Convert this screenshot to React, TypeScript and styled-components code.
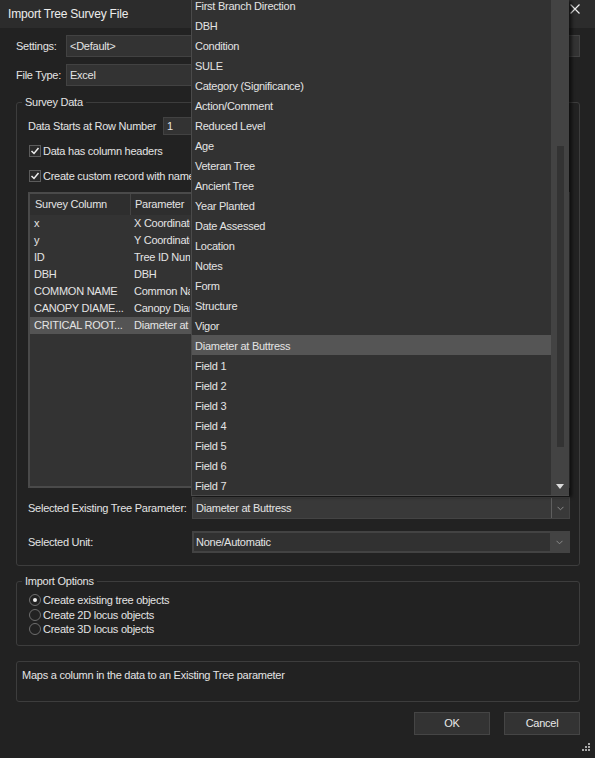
import * as React from 'react';
import styled, { createGlobalStyle } from 'styled-components';

const GlobalStyle = createGlobalStyle`
  html, body {
    margin: 0;
    padding: 0;
    background: #222222;
  }
  body {
    font-family: "Liberation Sans", Arial, sans-serif;
    font-size: 11px;
    letter-spacing: -0.25px;
    color: #e4e4e4;
  }
  * {
    box-sizing: border-box;
  }
`;

const Window = styled.div`
  position: relative;
  width: 595px;
  height: 758px;
  background: #222222;
  overflow: hidden;
`;
const TitleBar = styled.div`
  height: 28px;
  background: #2c2c2c;
  display: flex;
  justify-content: space-between;
  padding: 0 15px 0 8px;
`;
const Title = styled.span`
  font-size: 12px;
  line-height: 28px;
  letter-spacing: -0.2px;
  color: #ececec;
`;
const CloseIcon = styled.svg`
  margin-top: 4px;
`;
const Body = styled.div`
  padding: 0 15px 0 16px;
`;
const FieldRow = styled.div<{ $top: number; $height?: number }>`
  display: flex;
  align-items: center;
  height: ${p => p.$height || 22}px;
  margin-top: ${p => p.$top}px;
`;
const FieldLabel = styled.span<{ $width: number }>`
  width: ${p => p.$width}px;
  flex: none;
  white-space: nowrap;
`;
const TextBox = styled.div<{ $width?: number }>`
  flex: ${p => (p.$width ? 'none' : '1')};
  width: ${p => (p.$width ? `${p.$width}px` : 'auto')};
  height: 100%;
  display: flex;
  align-items: center;
  padding: 0 3px;
  background: #333333;
  border: 1px solid #424242;
`;
const GroupBox = styled.div<{ $top: number; $padLeft: number; $padBottom: number }>`
  margin-top: ${p => p.$top}px;
  border: 1px solid #3d3d3d;
  border-radius: 3px;
  padding: 0 9px ${p => p.$padBottom}px ${p => p.$padLeft}px;
`;
const GroupTitle = styled.div<{ $shift: number }>`
  width: fit-content;
  margin: -7px 0 0 ${p => p.$shift}px;
  padding: 0 3px;
  line-height: 13px;
  background: #222222;
`;
const CheckRow = styled.label<{ $top: number }>`
  display: flex;
  align-items: center;
  height: 14px;
  margin-top: ${p => p.$top}px;
  padding-left: 1px;
  white-space: nowrap;
`;
const CheckBox = styled.span`
  width: 12px;
  height: 12px;
  margin-right: 2px;
  flex: none;
  display: flex;
  align-items: center;
  justify-content: center;
  background: #2a2a2a;
  border: 1px solid #5c5c5c;
`;
const Table = styled.div`
  margin-top: 9px;
  height: 296px;
  background: #333333;
  border: 2px solid #4a4a4a;
  overflow: hidden;
`;
const TableHead = styled.div`
  display: grid;
  grid-template-columns: 100px 60px 1fr;
  height: 21px;
  background: #2e2e2e;
`;
const HeadCell = styled.div<{ $divider?: boolean }>`
  line-height: 21px;
  padding-left: ${p => (p.$divider ? 4 : 5)}px;
  border-left: ${p => (p.$divider ? '1px solid #454545' : 'none')};
  white-space: nowrap;
  overflow: hidden;
`;
const TableRow = styled.div<{ $selected?: boolean }>`
  display: grid;
  grid-template-columns: 100px 60px 1fr;
  height: 17px;
  line-height: 17px;
  background: ${p => (p.$selected ? '#545454' : 'transparent')};
`;
const Cell = styled.div`
  padding-left: 4px;
  white-space: nowrap;
  overflow: hidden;
`;
const Combo = styled.div<{ $open?: boolean }>`
  flex: 1;
  height: 100%;
  display: flex;
  align-items: stretch;
  background: ${p => (p.$open ? '#393939' : '#313131')};
  border: ${p => (p.$open ? '1px solid #444444' : '2px solid #434343')};
`;
const ComboText = styled.span<{ $open?: boolean }>`
  flex: 1;
  display: flex;
  align-items: center;
  padding-left: ${p => (p.$open ? 3 : 2)}px;
`;
const ComboButton = styled.span<{ $open?: boolean }>`
  width: 18px;
  flex: none;
  display: flex;
  align-items: center;
  justify-content: center;
  background: ${p => (p.$open ? 'transparent' : '#434343')};
  border-left: ${p => (p.$open ? '1px solid #5e5e5e' : 'none')};
`;
const RadioRow = styled.label<{ $top?: number }>`
  display: flex;
  align-items: center;
  height: 14.5px;
  margin-top: ${p => p.$top || 0}px;
  white-space: nowrap;
`;
const Radio = styled.span<{ $checked?: boolean }>`
  width: 12px;
  height: 12px;
  margin-right: 2px;
  flex: none;
  border-radius: 50%;
  border: 1px solid #6e6e6e;
  display: flex;
  align-items: center;
  justify-content: center;

  &::after {
    content: '';
    width: 4px;
    height: 4px;
    border-radius: 50%;
    background: ${p => (p.$checked ? '#f0f0f0' : 'transparent')};
  }
`;
const Description = styled.div`
  margin-top: 15px;
  height: 41px;
  border: 1px solid #3d3d3d;
  border-radius: 3px;
  padding: 7px 5px;
  line-height: 13px;
`;
const ButtonRow = styled.div`
  margin-top: 10px;
  display: flex;
  justify-content: flex-end;
  gap: 14px;
`;
const Button = styled.button`
  width: 76px;
  height: 23px;
  background: #333333;
  border: 1px solid #454545;
  color: #e8e8e8;
  font: inherit;
  letter-spacing: inherit;
  padding: 0;
`;
const GripRow = styled.div`
  margin: 7px -10px 0 0;
  display: flex;
  justify-content: flex-end;
`;
const DropList = styled.div`
  position: absolute;
  left: 191px;
  top: 0;
  width: 378px;
  height: 496px;
  display: flex;
  background: #323232;
  border-left: 1px solid #4a4a4a;
  border-bottom: 1px solid #4a4a4a;
  box-shadow: 3px 1px 3px rgba(0, 0, 0, 0.55);
`;
const DropItems = styled.div`
  flex: 1;
  overflow: hidden;
`;
const DropScroll = styled.div`
  margin-top: -5px;
`;
const DropItem = styled.div<{ $active?: boolean }>`
  height: 20px;
  line-height: 20px;
  padding: 1px 0 0 3px;
  white-space: nowrap;
  overflow: hidden;
  background: ${p => (p.$active ? '#555555' : 'transparent')};
`;
const ScrollTrack = styled.div`
  width: 18px;
  flex: none;
  background: #434343;
  display: flex;
  flex-direction: column;
  align-items: center;
`;
const ScrollThumb = styled.div`
  margin-top: 146px;
  width: 7px;
  height: 301px;
  background: #333333;
`;
const ScrollArrow = styled.div`
  margin-top: auto;
  margin-bottom: 6px;
  width: 0;
  height: 0;
  border-left: 4px solid transparent;
  border-right: 4px solid transparent;
  border-top: 5px solid #dcdcdc;
`;

const Check = () => (
  <svg width="10" height="10" viewBox="0 0 10 10">
    <path d="M1.5 5 L4 7.5 L8.5 2" fill="none" stroke="#eeeeee" strokeWidth="1.5" />
  </svg>
);

const Chevron = () => (
  <svg width="7" height="5" viewBox="0 0 7 5">
    <path d="M0.5 0.8 L3.5 3.8 L6.5 0.8" fill="none" stroke="#8a8a8a" strokeWidth="1" />
  </svg>
);

// the Parameter column is cut off by the open drop-down, so only its visible part is shown
const surveyRows = [
  ['x', 'X Coordinate'],
  ['y', 'Y Coordinate'],
  ['ID', 'Tree ID Number'],
  ['DBH', 'DBH'],
  ['COMMON NAME', 'Common Name'],
  ['CANOPY DIAME...', 'Canopy Diameter'],
  ['CRITICAL ROOT...', 'Diameter at Buttress'],
];

const parameters = [
  'First Branch Direction', 'DBH', 'Condition', 'SULE', 'Category (Significance)',
  'Action/Comment', 'Reduced Level', 'Age', 'Veteran Tree', 'Ancient Tree',
  'Year Planted', 'Date Assessed', 'Location', 'Notes', 'Form', 'Structure', 'Vigor',
  'Diameter at Buttress', 'Field 1', 'Field 2', 'Field 3', 'Field 4', 'Field 5',
  'Field 6', 'Field 7',
];

export default function App() {
  return (
    <Window>
      <GlobalStyle />
      <TitleBar>
        <Title>Import Tree Survey File</Title>
        <CloseIcon width="10" height="10" viewBox="0 0 10 10">
          <path d="M0.5 0.5 L9.5 9.5 M9.5 0.5 L0.5 9.5" stroke="#eeeeee" strokeWidth="1.2" />
        </CloseIcon>
      </TitleBar>
      <Body>
        <FieldRow $top={7}>
          <FieldLabel $width={50}>Settings:</FieldLabel>
          <TextBox>&lt;Default&gt;</TextBox>
        </FieldRow>
        <FieldRow $top={7}>
          <FieldLabel $width={50}>File Type:</FieldLabel>
          <TextBox $width={300}>Excel</TextBox>
        </FieldRow>

        <GroupBox $top={16} $padLeft={11} $padBottom={12}>
          <GroupTitle $shift={-6}>Survey Data</GroupTitle>
          <FieldRow $top={8} $height={18}>
            <FieldLabel $width={135}>Data Starts at Row Number</FieldLabel>
            <TextBox $width={60}>1</TextBox>
          </FieldRow>
          <CheckRow $top={9}>
            <CheckBox><Check /></CheckBox>
            Data has column headers
          </CheckRow>
          <CheckRow $top={11}>
            <CheckBox><Check /></CheckBox>
            Create custom record with name
          </CheckRow>
          <Table>
            <TableHead>
              <HeadCell>Survey Column</HeadCell>
              <HeadCell $divider>Parameter</HeadCell>
            </TableHead>
            {surveyRows.map(([column, parameter], i) => (
              <TableRow key={column} $selected={i === surveyRows.length - 1}>
                <Cell>{column}</Cell>
                <Cell>{parameter}</Cell>
              </TableRow>
            ))}
          </Table>
          <FieldRow $top={9}>
            <FieldLabel $width={164}>Selected Existing Tree Parameter:</FieldLabel>
            <Combo $open>
              <ComboText $open>Diameter at Buttress</ComboText>
              <ComboButton $open><Chevron /></ComboButton>
            </Combo>
          </FieldRow>
          <FieldRow $top={12}>
            <FieldLabel $width={164}>Selected Unit:</FieldLabel>
            <Combo>
              <ComboText>None/Automatic</ComboText>
              <ComboButton><Chevron /></ComboButton>
            </Combo>
          </FieldRow>
        </GroupBox>

        <GroupBox $top={15} $padLeft={12} $padBottom={8}>
          <GroupTitle $shift={-7}>Import Options</GroupTitle>
          <RadioRow $top={5}>
            <Radio $checked />
            Create existing tree objects
          </RadioRow>
          <RadioRow>
            <Radio />
            Create 2D locus objects
          </RadioRow>
          <RadioRow>
            <Radio />
            Create 3D locus objects
          </RadioRow>
        </GroupBox>

        <Description>Maps a column in the data to an Existing Tree parameter</Description>

        <ButtonRow>
          <Button>OK</Button>
          <Button>Cancel</Button>
        </ButtonRow>
        <GripRow>
          <svg width="9" height="9" viewBox="0 0 9 9">
            <g fill="#a8a8a8">
              <rect x="7" y="1" width="2" height="2" />
              <rect x="4" y="4" width="2" height="2" />
              <rect x="7" y="4" width="2" height="2" />
              <rect x="1" y="7" width="2" height="2" />
              <rect x="4" y="7" width="2" height="2" />
              <rect x="7" y="7" width="2" height="2" />
            </g>
          </svg>
        </GripRow>
      </Body>

      <DropList>
        <DropItems>
          <DropScroll>
            {parameters.map(name => (
              <DropItem key={name} $active={name === 'Diameter at Buttress'}>{name}</DropItem>
            ))}
          </DropScroll>
        </DropItems>
        <ScrollTrack>
          <ScrollThumb />
          <ScrollArrow />
        </ScrollTrack>
      </DropList>
    </Window>
  );
}
